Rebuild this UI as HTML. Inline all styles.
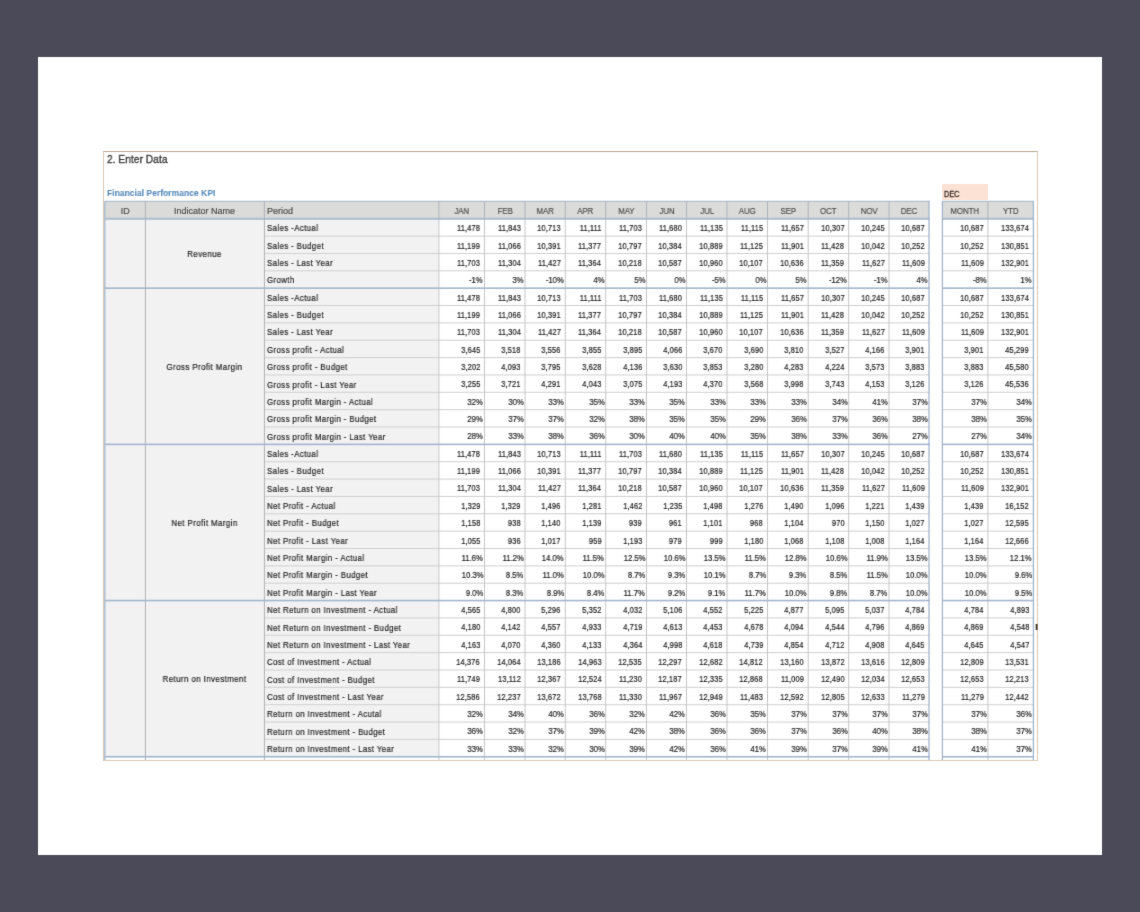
<!DOCTYPE html><html><head><meta charset="utf-8"><style>
*{margin:0;padding:0;box-sizing:border-box}
html,body{width:1140px;height:912px;overflow:hidden;background:#4b4a58}
body{position:relative;font-family:"Liberation Sans",sans-serif}
div{position:absolute}
.t{will-change:transform}
.t{white-space:nowrap;line-height:1}
.n{font-size:9.4px;color:#222222;text-align:right;transform-origin:100% 50%;-webkit-text-stroke:0.22px #222222}
.l{font-size:8.7px;color:#222222;transform-origin:0 50%;letter-spacing:0.45px;-webkit-text-stroke:0.2px #222222}
.h{font-size:9px;color:#4c4c4c;text-align:center;letter-spacing:0px;-webkit-text-stroke:0.18px #4c4c4c}
.g{font-size:8.8px;color:#222222;text-align:center;-webkit-text-stroke:0.2px #222222}
</style></head><body><svg width="0" height="0" style="position:absolute"><filter id="f" x="0" y="0" width="100%" height="100%" color-interpolation-filters="sRGB"><feConvolveMatrix order="3" kernelMatrix="0.0100 0.0800 0.0100 0.0800 0.6400 0.0800 0.0100 0.0800 0.0100" edgeMode="duplicate"/></filter></svg><div id="w" style="left:0;top:0;width:1140px;height:912px;filter:url(#f)"><div style="left:38.00px;top:57.00px;width:1064.00px;height:798.00px;background:#ffffff;"></div>
<div style="left:103px;top:151px;width:935px;height:610px;border:1px solid #dbc9b3;border-top-color:#b6a892"></div>
<div class="t" style="left:107px;top:154.1px;font-size:11.8px;color:#383838;transform:scaleX(0.87);transform-origin:0 50%;-webkit-text-stroke:0.35px #383838">2. Enter Data</div>
<div class="t" style="left:107px;top:188.3px;font-size:9.5px;color:#5286b9;font-weight:bold;-webkit-text-stroke:0.05px #5286b9;transform:scaleX(0.9);transform-origin:0 50%">Financial Performance KPI</div>
<div style="left:942.40px;top:184.00px;width:45.50px;height:16.00px;background:#fbe2d5;"></div>
<div class="t" style="left:944.4px;top:189.5px;font-size:8.5px;color:#3a2e28;transform:scaleX(0.86);transform-origin:0 50%;-webkit-text-stroke:0.3px #3a2e28">DEC</div>
<div style="left:104.80px;top:201.30px;width:824.20px;height:17.45px;background:#dbdbd9;"></div>
<div style="left:942.40px;top:201.30px;width:91.00px;height:17.45px;background:#dbdbd9;"></div>
<div style="left:104.80px;top:218.75px;width:334.10px;height:538.00px;background:#f2f2f2;"></div>
<div style="left:264px;top:235px;width:665px;height:1px;background:rgba(207,207,207,0.395)"></div>
<div style="left:264px;top:236px;width:665px;height:1px;background:rgba(207,207,207,0.605)"></div>
<div style="left:942px;top:235px;width:91px;height:1px;background:rgba(207,207,207,0.395)"></div>
<div style="left:942px;top:236px;width:91px;height:1px;background:rgba(207,207,207,0.605)"></div>
<div style="left:264px;top:253px;width:665px;height:1px;background:rgba(207,207,207,0.960)"></div>
<div style="left:942px;top:253px;width:91px;height:1px;background:rgba(207,207,207,0.960)"></div>
<div style="left:264px;top:270px;width:665px;height:1px;background:rgba(207,207,207,0.685)"></div>
<div style="left:264px;top:271px;width:665px;height:1px;background:rgba(207,207,207,0.315)"></div>
<div style="left:942px;top:270px;width:91px;height:1px;background:rgba(207,207,207,0.685)"></div>
<div style="left:942px;top:271px;width:91px;height:1px;background:rgba(207,207,207,0.315)"></div>
<div style="left:264px;top:305px;width:665px;height:1px;background:rgba(207,207,207,0.975)"></div>
<div style="left:942px;top:305px;width:91px;height:1px;background:rgba(207,207,207,0.975)"></div>
<div style="left:264px;top:322px;width:665px;height:1px;background:rgba(207,207,207,0.620)"></div>
<div style="left:264px;top:323px;width:665px;height:1px;background:rgba(207,207,207,0.380)"></div>
<div style="left:942px;top:322px;width:91px;height:1px;background:rgba(207,207,207,0.620)"></div>
<div style="left:942px;top:323px;width:91px;height:1px;background:rgba(207,207,207,0.380)"></div>
<div style="left:264px;top:339px;width:665px;height:1px;background:rgba(207,207,207,0.265)"></div>
<div style="left:264px;top:340px;width:665px;height:1px;background:rgba(207,207,207,0.735)"></div>
<div style="left:942px;top:339px;width:91px;height:1px;background:rgba(207,207,207,0.265)"></div>
<div style="left:942px;top:340px;width:91px;height:1px;background:rgba(207,207,207,0.735)"></div>
<div style="left:264px;top:357px;width:665px;height:1px;background:rgba(207,207,207,0.910)"></div>
<div style="left:264px;top:358px;width:665px;height:1px;background:rgba(207,207,207,0.090)"></div>
<div style="left:942px;top:357px;width:91px;height:1px;background:rgba(207,207,207,0.910)"></div>
<div style="left:942px;top:358px;width:91px;height:1px;background:rgba(207,207,207,0.090)"></div>
<div style="left:264px;top:374px;width:665px;height:1px;background:rgba(207,207,207,0.555)"></div>
<div style="left:264px;top:375px;width:665px;height:1px;background:rgba(207,207,207,0.445)"></div>
<div style="left:942px;top:374px;width:91px;height:1px;background:rgba(207,207,207,0.555)"></div>
<div style="left:942px;top:375px;width:91px;height:1px;background:rgba(207,207,207,0.445)"></div>
<div style="left:264px;top:391px;width:665px;height:1px;background:rgba(207,207,207,0.200)"></div>
<div style="left:264px;top:392px;width:665px;height:1px;background:rgba(207,207,207,0.800)"></div>
<div style="left:942px;top:391px;width:91px;height:1px;background:rgba(207,207,207,0.200)"></div>
<div style="left:942px;top:392px;width:91px;height:1px;background:rgba(207,207,207,0.800)"></div>
<div style="left:264px;top:409px;width:665px;height:1px;background:rgba(207,207,207,0.845)"></div>
<div style="left:264px;top:410px;width:665px;height:1px;background:rgba(207,207,207,0.155)"></div>
<div style="left:942px;top:409px;width:91px;height:1px;background:rgba(207,207,207,0.845)"></div>
<div style="left:942px;top:410px;width:91px;height:1px;background:rgba(207,207,207,0.155)"></div>
<div style="left:264px;top:426px;width:665px;height:1px;background:rgba(207,207,207,0.490)"></div>
<div style="left:264px;top:427px;width:665px;height:1px;background:rgba(207,207,207,0.510)"></div>
<div style="left:942px;top:426px;width:91px;height:1px;background:rgba(207,207,207,0.490)"></div>
<div style="left:942px;top:427px;width:91px;height:1px;background:rgba(207,207,207,0.510)"></div>
<div style="left:264px;top:461px;width:665px;height:1px;background:rgba(207,207,207,0.780)"></div>
<div style="left:264px;top:462px;width:665px;height:1px;background:rgba(207,207,207,0.220)"></div>
<div style="left:942px;top:461px;width:91px;height:1px;background:rgba(207,207,207,0.780)"></div>
<div style="left:942px;top:462px;width:91px;height:1px;background:rgba(207,207,207,0.220)"></div>
<div style="left:264px;top:478px;width:665px;height:1px;background:rgba(207,207,207,0.425)"></div>
<div style="left:264px;top:479px;width:665px;height:1px;background:rgba(207,207,207,0.575)"></div>
<div style="left:942px;top:478px;width:91px;height:1px;background:rgba(207,207,207,0.425)"></div>
<div style="left:942px;top:479px;width:91px;height:1px;background:rgba(207,207,207,0.575)"></div>
<div style="left:264px;top:495px;width:665px;height:1px;background:rgba(207,207,207,0.070)"></div>
<div style="left:264px;top:496px;width:665px;height:1px;background:rgba(207,207,207,0.930)"></div>
<div style="left:942px;top:495px;width:91px;height:1px;background:rgba(207,207,207,0.070)"></div>
<div style="left:942px;top:496px;width:91px;height:1px;background:rgba(207,207,207,0.930)"></div>
<div style="left:264px;top:513px;width:665px;height:1px;background:rgba(207,207,207,0.715)"></div>
<div style="left:264px;top:514px;width:665px;height:1px;background:rgba(207,207,207,0.285)"></div>
<div style="left:942px;top:513px;width:91px;height:1px;background:rgba(207,207,207,0.715)"></div>
<div style="left:942px;top:514px;width:91px;height:1px;background:rgba(207,207,207,0.285)"></div>
<div style="left:264px;top:530px;width:665px;height:1px;background:rgba(207,207,207,0.360)"></div>
<div style="left:264px;top:531px;width:665px;height:1px;background:rgba(207,207,207,0.640)"></div>
<div style="left:942px;top:530px;width:91px;height:1px;background:rgba(207,207,207,0.360)"></div>
<div style="left:942px;top:531px;width:91px;height:1px;background:rgba(207,207,207,0.640)"></div>
<div style="left:264px;top:548px;width:665px;height:1px;background:rgba(207,207,207,0.995)"></div>
<div style="left:942px;top:548px;width:91px;height:1px;background:rgba(207,207,207,0.995)"></div>
<div style="left:264px;top:565px;width:665px;height:1px;background:rgba(207,207,207,0.650)"></div>
<div style="left:264px;top:566px;width:665px;height:1px;background:rgba(207,207,207,0.350)"></div>
<div style="left:942px;top:565px;width:91px;height:1px;background:rgba(207,207,207,0.650)"></div>
<div style="left:942px;top:566px;width:91px;height:1px;background:rgba(207,207,207,0.350)"></div>
<div style="left:264px;top:582px;width:665px;height:1px;background:rgba(207,207,207,0.295)"></div>
<div style="left:264px;top:583px;width:665px;height:1px;background:rgba(207,207,207,0.705)"></div>
<div style="left:942px;top:582px;width:91px;height:1px;background:rgba(207,207,207,0.295)"></div>
<div style="left:942px;top:583px;width:91px;height:1px;background:rgba(207,207,207,0.705)"></div>
<div style="left:264px;top:617px;width:665px;height:1px;background:rgba(207,207,207,0.585)"></div>
<div style="left:264px;top:618px;width:665px;height:1px;background:rgba(207,207,207,0.415)"></div>
<div style="left:942px;top:617px;width:91px;height:1px;background:rgba(207,207,207,0.585)"></div>
<div style="left:942px;top:618px;width:91px;height:1px;background:rgba(207,207,207,0.415)"></div>
<div style="left:264px;top:634px;width:665px;height:1px;background:rgba(207,207,207,0.230)"></div>
<div style="left:264px;top:635px;width:665px;height:1px;background:rgba(207,207,207,0.770)"></div>
<div style="left:942px;top:634px;width:91px;height:1px;background:rgba(207,207,207,0.230)"></div>
<div style="left:942px;top:635px;width:91px;height:1px;background:rgba(207,207,207,0.770)"></div>
<div style="left:264px;top:652px;width:665px;height:1px;background:rgba(207,207,207,0.875)"></div>
<div style="left:264px;top:653px;width:665px;height:1px;background:rgba(207,207,207,0.125)"></div>
<div style="left:942px;top:652px;width:91px;height:1px;background:rgba(207,207,207,0.875)"></div>
<div style="left:942px;top:653px;width:91px;height:1px;background:rgba(207,207,207,0.125)"></div>
<div style="left:264px;top:669px;width:665px;height:1px;background:rgba(207,207,207,0.520)"></div>
<div style="left:264px;top:670px;width:665px;height:1px;background:rgba(207,207,207,0.480)"></div>
<div style="left:942px;top:669px;width:91px;height:1px;background:rgba(207,207,207,0.520)"></div>
<div style="left:942px;top:670px;width:91px;height:1px;background:rgba(207,207,207,0.480)"></div>
<div style="left:264px;top:686px;width:665px;height:1px;background:rgba(207,207,207,0.165)"></div>
<div style="left:264px;top:687px;width:665px;height:1px;background:rgba(207,207,207,0.835)"></div>
<div style="left:942px;top:686px;width:91px;height:1px;background:rgba(207,207,207,0.165)"></div>
<div style="left:942px;top:687px;width:91px;height:1px;background:rgba(207,207,207,0.835)"></div>
<div style="left:264px;top:704px;width:665px;height:1px;background:rgba(207,207,207,0.810)"></div>
<div style="left:264px;top:705px;width:665px;height:1px;background:rgba(207,207,207,0.190)"></div>
<div style="left:942px;top:704px;width:91px;height:1px;background:rgba(207,207,207,0.810)"></div>
<div style="left:942px;top:705px;width:91px;height:1px;background:rgba(207,207,207,0.190)"></div>
<div style="left:264px;top:721px;width:665px;height:1px;background:rgba(207,207,207,0.455)"></div>
<div style="left:264px;top:722px;width:665px;height:1px;background:rgba(207,207,207,0.545)"></div>
<div style="left:942px;top:721px;width:91px;height:1px;background:rgba(207,207,207,0.455)"></div>
<div style="left:942px;top:722px;width:91px;height:1px;background:rgba(207,207,207,0.545)"></div>
<div style="left:264px;top:738px;width:665px;height:1px;background:rgba(207,207,207,0.100)"></div>
<div style="left:264px;top:739px;width:665px;height:1px;background:rgba(207,207,207,0.900)"></div>
<div style="left:942px;top:738px;width:91px;height:1px;background:rgba(207,207,207,0.100)"></div>
<div style="left:942px;top:739px;width:91px;height:1px;background:rgba(207,207,207,0.900)"></div>
<div style="left:144px;top:219px;width:1px;height:541px;background:rgba(176,176,176,0.100)"></div>
<div style="left:145px;top:219px;width:1px;height:541px;background:rgba(176,176,176,0.900)"></div>
<div style="left:144px;top:201px;width:1px;height:18px;background:rgba(173,179,185,0.100)"></div>
<div style="left:145px;top:201px;width:1px;height:18px;background:rgba(173,179,185,0.900)"></div>
<div style="left:263px;top:219px;width:1px;height:541px;background:rgba(176,176,176,0.100)"></div>
<div style="left:264px;top:219px;width:1px;height:541px;background:rgba(176,176,176,0.900)"></div>
<div style="left:263px;top:201px;width:1px;height:18px;background:rgba(173,179,185,0.100)"></div>
<div style="left:264px;top:201px;width:1px;height:18px;background:rgba(173,179,185,0.900)"></div>
<div style="left:438px;top:219px;width:1px;height:541px;background:rgba(198,198,198,0.600)"></div>
<div style="left:439px;top:219px;width:1px;height:541px;background:rgba(198,198,198,0.400)"></div>
<div style="left:438px;top:201px;width:1px;height:18px;background:rgba(173,179,185,0.600)"></div>
<div style="left:439px;top:201px;width:1px;height:18px;background:rgba(173,179,185,0.400)"></div>
<div style="left:484px;top:219px;width:1px;height:541px;background:rgba(198,198,198,1.000)"></div>
<div style="left:484px;top:201px;width:1px;height:18px;background:rgba(173,179,185,1.000)"></div>
<div style="left:524px;top:219px;width:1px;height:541px;background:rgba(198,198,198,0.500)"></div>
<div style="left:525px;top:219px;width:1px;height:541px;background:rgba(198,198,198,0.500)"></div>
<div style="left:524px;top:201px;width:1px;height:18px;background:rgba(173,179,185,0.500)"></div>
<div style="left:525px;top:201px;width:1px;height:18px;background:rgba(173,179,185,0.500)"></div>
<div style="left:564px;top:219px;width:1px;height:541px;background:rgba(198,198,198,0.200)"></div>
<div style="left:565px;top:219px;width:1px;height:541px;background:rgba(198,198,198,0.800)"></div>
<div style="left:564px;top:201px;width:1px;height:18px;background:rgba(173,179,185,0.200)"></div>
<div style="left:565px;top:201px;width:1px;height:18px;background:rgba(173,179,185,0.800)"></div>
<div style="left:605px;top:219px;width:1px;height:541px;background:rgba(198,198,198,0.800)"></div>
<div style="left:606px;top:219px;width:1px;height:541px;background:rgba(198,198,198,0.200)"></div>
<div style="left:605px;top:201px;width:1px;height:18px;background:rgba(173,179,185,0.800)"></div>
<div style="left:606px;top:201px;width:1px;height:18px;background:rgba(173,179,185,0.200)"></div>
<div style="left:646px;top:219px;width:1px;height:541px;background:rgba(198,198,198,1.000)"></div>
<div style="left:646px;top:201px;width:1px;height:18px;background:rgba(173,179,185,1.000)"></div>
<div style="left:686px;top:219px;width:1px;height:541px;background:rgba(198,198,198,1.000)"></div>
<div style="left:686px;top:201px;width:1px;height:18px;background:rgba(173,179,185,1.000)"></div>
<div style="left:726px;top:219px;width:1px;height:541px;background:rgba(198,198,198,0.500)"></div>
<div style="left:727px;top:219px;width:1px;height:541px;background:rgba(198,198,198,0.500)"></div>
<div style="left:726px;top:201px;width:1px;height:18px;background:rgba(173,179,185,0.500)"></div>
<div style="left:727px;top:201px;width:1px;height:18px;background:rgba(173,179,185,0.500)"></div>
<div style="left:767px;top:219px;width:1px;height:541px;background:rgba(198,198,198,1.000)"></div>
<div style="left:767px;top:201px;width:1px;height:18px;background:rgba(173,179,185,1.000)"></div>
<div style="left:807px;top:219px;width:1px;height:541px;background:rgba(198,198,198,0.300)"></div>
<div style="left:808px;top:219px;width:1px;height:541px;background:rgba(198,198,198,0.700)"></div>
<div style="left:807px;top:201px;width:1px;height:18px;background:rgba(173,179,185,0.300)"></div>
<div style="left:808px;top:201px;width:1px;height:18px;background:rgba(173,179,185,0.700)"></div>
<div style="left:848px;top:219px;width:1px;height:541px;background:rgba(198,198,198,0.800)"></div>
<div style="left:849px;top:219px;width:1px;height:541px;background:rgba(198,198,198,0.200)"></div>
<div style="left:848px;top:201px;width:1px;height:18px;background:rgba(173,179,185,0.800)"></div>
<div style="left:849px;top:201px;width:1px;height:18px;background:rgba(173,179,185,0.200)"></div>
<div style="left:888px;top:219px;width:1px;height:541px;background:rgba(198,198,198,0.500)"></div>
<div style="left:889px;top:219px;width:1px;height:541px;background:rgba(198,198,198,0.500)"></div>
<div style="left:888px;top:201px;width:1px;height:18px;background:rgba(173,179,185,0.500)"></div>
<div style="left:889px;top:201px;width:1px;height:18px;background:rgba(173,179,185,0.500)"></div>
<div style="left:987px;top:219px;width:1px;height:541px;background:rgba(198,198,198,0.600)"></div>
<div style="left:988px;top:219px;width:1px;height:541px;background:rgba(198,198,198,0.400)"></div>
<div style="left:987px;top:201px;width:1px;height:18px;background:rgba(173,179,185,0.600)"></div>
<div style="left:988px;top:201px;width:1px;height:18px;background:rgba(173,179,185,0.400)"></div>
<div style="left:105px;top:200px;width:825px;height:1px;background:rgba(162,182,206,0.200)"></div>
<div style="left:105px;top:201px;width:825px;height:1px;background:rgba(162,182,206,0.800)"></div>
<div style="left:105px;top:217px;width:825px;height:1px;background:rgba(169,182,198,0.250)"></div>
<div style="left:105px;top:218px;width:825px;height:1px;background:rgba(169,182,198,0.750)"></div>
<div style="left:105px;top:218px;width:825px;height:1px;background:rgba(162,182,206,0.250)"></div>
<div style="left:105px;top:219px;width:825px;height:1px;background:rgba(162,182,206,0.750)"></div>
<div style="left:105px;top:287px;width:825px;height:1px;background:rgba(162,182,206,0.630)"></div>
<div style="left:105px;top:288px;width:825px;height:1px;background:rgba(162,182,206,0.970)"></div>
<div style="left:105px;top:443px;width:825px;height:1px;background:rgba(162,182,206,0.435)"></div>
<div style="left:105px;top:444px;width:825px;height:1px;background:rgba(162,182,206,1.000)"></div>
<div style="left:105px;top:445px;width:825px;height:1px;background:rgba(162,182,206,0.165)"></div>
<div style="left:105px;top:599px;width:825px;height:1px;background:rgba(162,182,206,0.240)"></div>
<div style="left:105px;top:600px;width:825px;height:1px;background:rgba(162,182,206,1.000)"></div>
<div style="left:105px;top:601px;width:825px;height:1px;background:rgba(162,182,206,0.360)"></div>
<div style="left:105px;top:755px;width:825px;height:1px;background:rgba(162,182,206,0.045)"></div>
<div style="left:105px;top:756px;width:825px;height:1px;background:rgba(162,182,206,1.000)"></div>
<div style="left:105px;top:757px;width:825px;height:1px;background:rgba(162,182,206,0.555)"></div>
<div style="left:104px;top:201px;width:1px;height:559px;background:rgba(162,182,206,0.850)"></div>
<div style="left:105px;top:201px;width:1px;height:559px;background:rgba(162,182,206,0.450)"></div>
<div style="left:928px;top:201px;width:1px;height:559px;background:rgba(162,182,206,0.650)"></div>
<div style="left:929px;top:201px;width:1px;height:559px;background:rgba(162,182,206,0.650)"></div>
<div style="left:942px;top:200px;width:92px;height:1px;background:rgba(162,182,206,0.200)"></div>
<div style="left:942px;top:201px;width:92px;height:1px;background:rgba(162,182,206,0.800)"></div>
<div style="left:942px;top:217px;width:92px;height:1px;background:rgba(169,182,198,0.250)"></div>
<div style="left:942px;top:218px;width:92px;height:1px;background:rgba(169,182,198,0.750)"></div>
<div style="left:942px;top:218px;width:92px;height:1px;background:rgba(162,182,206,0.250)"></div>
<div style="left:942px;top:219px;width:92px;height:1px;background:rgba(162,182,206,0.750)"></div>
<div style="left:942px;top:287px;width:92px;height:1px;background:rgba(162,182,206,0.630)"></div>
<div style="left:942px;top:288px;width:92px;height:1px;background:rgba(162,182,206,0.970)"></div>
<div style="left:942px;top:443px;width:92px;height:1px;background:rgba(162,182,206,0.435)"></div>
<div style="left:942px;top:444px;width:92px;height:1px;background:rgba(162,182,206,1.000)"></div>
<div style="left:942px;top:445px;width:92px;height:1px;background:rgba(162,182,206,0.165)"></div>
<div style="left:942px;top:599px;width:92px;height:1px;background:rgba(162,182,206,0.240)"></div>
<div style="left:942px;top:600px;width:92px;height:1px;background:rgba(162,182,206,1.000)"></div>
<div style="left:942px;top:601px;width:92px;height:1px;background:rgba(162,182,206,0.360)"></div>
<div style="left:942px;top:755px;width:92px;height:1px;background:rgba(162,182,206,0.045)"></div>
<div style="left:942px;top:756px;width:92px;height:1px;background:rgba(162,182,206,1.000)"></div>
<div style="left:942px;top:757px;width:92px;height:1px;background:rgba(162,182,206,0.555)"></div>
<div style="left:941px;top:201px;width:1px;height:559px;background:rgba(162,182,206,0.250)"></div>
<div style="left:942px;top:201px;width:1px;height:559px;background:rgba(162,182,206,1.000)"></div>
<div style="left:943px;top:201px;width:1px;height:559px;background:rgba(162,182,206,0.050)"></div>
<div style="left:1032px;top:201px;width:1px;height:559px;background:rgba(162,182,206,0.250)"></div>
<div style="left:1033px;top:201px;width:1px;height:559px;background:rgba(162,182,206,1.000)"></div>
<div style="left:1034px;top:201px;width:1px;height:559px;background:rgba(162,182,206,0.050)"></div>
<div class="t h" style="left:104.80px;top:207.30px;width:40.60px">ID</div>
<div class="t h" style="left:145.40px;top:207.30px;width:119.00px">Indicator Name</div>
<div class="t h" style="left:266.70px;top:207.30px;text-align:left">Period</div>
<div class="t h" style="left:438.90px;top:207.30px;width:45.60px;transform:scaleX(0.86)">JAN</div>
<div class="t h" style="left:484.50px;top:207.30px;width:40.50px;transform:scaleX(0.86)">FEB</div>
<div class="t h" style="left:525.00px;top:207.30px;width:40.30px;transform:scaleX(0.86)">MAR</div>
<div class="t h" style="left:565.30px;top:207.30px;width:40.40px;transform:scaleX(0.86)">APR</div>
<div class="t h" style="left:605.70px;top:207.30px;width:40.80px;transform:scaleX(0.86)">MAY</div>
<div class="t h" style="left:646.50px;top:207.30px;width:40.00px;transform:scaleX(0.86)">JUN</div>
<div class="t h" style="left:686.50px;top:207.30px;width:40.50px;transform:scaleX(0.86)">JUL</div>
<div class="t h" style="left:727.00px;top:207.30px;width:40.50px;transform:scaleX(0.86)">AUG</div>
<div class="t h" style="left:767.50px;top:207.30px;width:40.70px;transform:scaleX(0.86)">SEP</div>
<div class="t h" style="left:808.20px;top:207.30px;width:40.50px;transform:scaleX(0.86)">OCT</div>
<div class="t h" style="left:848.70px;top:207.30px;width:40.30px;transform:scaleX(0.86)">NOV</div>
<div class="t h" style="left:889.00px;top:207.30px;width:40.00px;transform:scaleX(0.86)">DEC</div>
<div class="t h" style="left:942.40px;top:207.30px;width:45.50px;transform:scaleX(0.86)">MONTH</div>
<div class="t h" style="left:987.90px;top:207.30px;width:45.50px;transform:scaleX(0.86)">YTD</div>
<div class="t g" style="left:145.40px;top:249.71px;width:119.00px;transform:scaleX(0.9);letter-spacing:0.45px">Revenue</div>
<div class="t g" style="left:145.40px;top:362.52px;width:119.00px;transform:scaleX(0.9);letter-spacing:0.45px">Gross Profit Margin</div>
<div class="t g" style="left:145.40px;top:518.71px;width:119.00px;transform:scaleX(0.9);letter-spacing:0.45px">Net Profit Margin</div>
<div class="t g" style="left:145.40px;top:674.91px;width:119.00px;transform:scaleX(0.9);letter-spacing:0.45px">Return on Investment</div>
<div class="t l" style="left:266.70px;top:224.35px;transform:scaleX(0.9)">Sales -Actual</div>
<div class="t n" style="right:659.90px;top:223.15px;transform:scaleX(0.823)">11,478</div>
<div class="t n" style="right:619.40px;top:223.15px;transform:scaleX(0.823)">11,843</div>
<div class="t n" style="right:579.10px;top:223.15px;transform:scaleX(0.823)">10,713</div>
<div class="t n" style="right:538.70px;top:223.15px;transform:scaleX(0.823)">11,111</div>
<div class="t n" style="right:497.90px;top:223.15px;transform:scaleX(0.823)">11,703</div>
<div class="t n" style="right:457.90px;top:223.15px;transform:scaleX(0.823)">11,680</div>
<div class="t n" style="right:417.40px;top:223.15px;transform:scaleX(0.823)">11,135</div>
<div class="t n" style="right:376.90px;top:223.15px;transform:scaleX(0.823)">11,115</div>
<div class="t n" style="right:336.20px;top:223.15px;transform:scaleX(0.823)">11,657</div>
<div class="t n" style="right:295.70px;top:223.15px;transform:scaleX(0.823)">10,307</div>
<div class="t n" style="right:255.40px;top:223.15px;transform:scaleX(0.823)">10,245</div>
<div class="t n" style="right:215.40px;top:223.15px;transform:scaleX(0.823)">10,687</div>
<div class="t n" style="right:156.50px;top:223.15px;transform:scaleX(0.823)">10,687</div>
<div class="t n" style="right:111.00px;top:223.15px;transform:scaleX(0.823)">133,674</div>
<div class="t l" style="left:266.70px;top:241.70px;transform:scaleX(0.9)">Sales - Budget</div>
<div class="t n" style="right:659.90px;top:240.50px;transform:scaleX(0.823)">11,199</div>
<div class="t n" style="right:619.40px;top:240.50px;transform:scaleX(0.823)">11,066</div>
<div class="t n" style="right:579.10px;top:240.50px;transform:scaleX(0.823)">10,391</div>
<div class="t n" style="right:538.70px;top:240.50px;transform:scaleX(0.823)">11,377</div>
<div class="t n" style="right:497.90px;top:240.50px;transform:scaleX(0.823)">10,797</div>
<div class="t n" style="right:457.90px;top:240.50px;transform:scaleX(0.823)">10,384</div>
<div class="t n" style="right:417.40px;top:240.50px;transform:scaleX(0.823)">10,889</div>
<div class="t n" style="right:376.90px;top:240.50px;transform:scaleX(0.823)">11,125</div>
<div class="t n" style="right:336.20px;top:240.50px;transform:scaleX(0.823)">11,901</div>
<div class="t n" style="right:295.70px;top:240.50px;transform:scaleX(0.823)">11,428</div>
<div class="t n" style="right:255.40px;top:240.50px;transform:scaleX(0.823)">10,042</div>
<div class="t n" style="right:215.40px;top:240.50px;transform:scaleX(0.823)">10,252</div>
<div class="t n" style="right:156.50px;top:240.50px;transform:scaleX(0.823)">10,252</div>
<div class="t n" style="right:111.00px;top:240.50px;transform:scaleX(0.823)">130,851</div>
<div class="t l" style="left:266.70px;top:259.06px;transform:scaleX(0.9)">Sales - Last Year</div>
<div class="t n" style="right:659.90px;top:257.86px;transform:scaleX(0.823)">11,703</div>
<div class="t n" style="right:619.40px;top:257.86px;transform:scaleX(0.823)">11,304</div>
<div class="t n" style="right:579.10px;top:257.86px;transform:scaleX(0.823)">11,427</div>
<div class="t n" style="right:538.70px;top:257.86px;transform:scaleX(0.823)">11,364</div>
<div class="t n" style="right:497.90px;top:257.86px;transform:scaleX(0.823)">10,218</div>
<div class="t n" style="right:457.90px;top:257.86px;transform:scaleX(0.823)">10,587</div>
<div class="t n" style="right:417.40px;top:257.86px;transform:scaleX(0.823)">10,960</div>
<div class="t n" style="right:376.90px;top:257.86px;transform:scaleX(0.823)">10,107</div>
<div class="t n" style="right:336.20px;top:257.86px;transform:scaleX(0.823)">10,636</div>
<div class="t n" style="right:295.70px;top:257.86px;transform:scaleX(0.823)">11,359</div>
<div class="t n" style="right:255.40px;top:257.86px;transform:scaleX(0.823)">11,627</div>
<div class="t n" style="right:215.40px;top:257.86px;transform:scaleX(0.823)">11,609</div>
<div class="t n" style="right:156.50px;top:257.86px;transform:scaleX(0.823)">11,609</div>
<div class="t n" style="right:111.00px;top:257.86px;transform:scaleX(0.823)">132,901</div>
<div class="t l" style="left:266.70px;top:276.42px;transform:scaleX(0.9)">Growth</div>
<div class="t n" style="right:656.90px;top:275.21px;transform:scaleX(0.823)">-1%</div>
<div class="t n" style="right:616.40px;top:275.21px;transform:scaleX(0.823)">3%</div>
<div class="t n" style="right:576.10px;top:275.21px;transform:scaleX(0.823)">-10%</div>
<div class="t n" style="right:535.70px;top:275.21px;transform:scaleX(0.823)">4%</div>
<div class="t n" style="right:494.90px;top:275.21px;transform:scaleX(0.823)">5%</div>
<div class="t n" style="right:454.90px;top:275.21px;transform:scaleX(0.823)">0%</div>
<div class="t n" style="right:414.40px;top:275.21px;transform:scaleX(0.823)">-5%</div>
<div class="t n" style="right:373.90px;top:275.21px;transform:scaleX(0.823)">0%</div>
<div class="t n" style="right:333.20px;top:275.21px;transform:scaleX(0.823)">5%</div>
<div class="t n" style="right:292.70px;top:275.21px;transform:scaleX(0.823)">-12%</div>
<div class="t n" style="right:252.40px;top:275.21px;transform:scaleX(0.823)">-1%</div>
<div class="t n" style="right:212.40px;top:275.21px;transform:scaleX(0.823)">4%</div>
<div class="t n" style="right:153.50px;top:275.21px;transform:scaleX(0.823)">-8%</div>
<div class="t n" style="right:108.00px;top:275.21px;transform:scaleX(0.823)">1%</div>
<div class="t l" style="left:266.70px;top:293.77px;transform:scaleX(0.9)">Sales -Actual</div>
<div class="t n" style="right:659.90px;top:292.57px;transform:scaleX(0.823)">11,478</div>
<div class="t n" style="right:619.40px;top:292.57px;transform:scaleX(0.823)">11,843</div>
<div class="t n" style="right:579.10px;top:292.57px;transform:scaleX(0.823)">10,713</div>
<div class="t n" style="right:538.70px;top:292.57px;transform:scaleX(0.823)">11,111</div>
<div class="t n" style="right:497.90px;top:292.57px;transform:scaleX(0.823)">11,703</div>
<div class="t n" style="right:457.90px;top:292.57px;transform:scaleX(0.823)">11,680</div>
<div class="t n" style="right:417.40px;top:292.57px;transform:scaleX(0.823)">11,135</div>
<div class="t n" style="right:376.90px;top:292.57px;transform:scaleX(0.823)">11,115</div>
<div class="t n" style="right:336.20px;top:292.57px;transform:scaleX(0.823)">11,657</div>
<div class="t n" style="right:295.70px;top:292.57px;transform:scaleX(0.823)">10,307</div>
<div class="t n" style="right:255.40px;top:292.57px;transform:scaleX(0.823)">10,245</div>
<div class="t n" style="right:215.40px;top:292.57px;transform:scaleX(0.823)">10,687</div>
<div class="t n" style="right:156.50px;top:292.57px;transform:scaleX(0.823)">10,687</div>
<div class="t n" style="right:111.00px;top:292.57px;transform:scaleX(0.823)">133,674</div>
<div class="t l" style="left:266.70px;top:311.12px;transform:scaleX(0.9)">Sales - Budget</div>
<div class="t n" style="right:659.90px;top:309.92px;transform:scaleX(0.823)">11,199</div>
<div class="t n" style="right:619.40px;top:309.92px;transform:scaleX(0.823)">11,066</div>
<div class="t n" style="right:579.10px;top:309.92px;transform:scaleX(0.823)">10,391</div>
<div class="t n" style="right:538.70px;top:309.92px;transform:scaleX(0.823)">11,377</div>
<div class="t n" style="right:497.90px;top:309.92px;transform:scaleX(0.823)">10,797</div>
<div class="t n" style="right:457.90px;top:309.92px;transform:scaleX(0.823)">10,384</div>
<div class="t n" style="right:417.40px;top:309.92px;transform:scaleX(0.823)">10,889</div>
<div class="t n" style="right:376.90px;top:309.92px;transform:scaleX(0.823)">11,125</div>
<div class="t n" style="right:336.20px;top:309.92px;transform:scaleX(0.823)">11,901</div>
<div class="t n" style="right:295.70px;top:309.92px;transform:scaleX(0.823)">11,428</div>
<div class="t n" style="right:255.40px;top:309.92px;transform:scaleX(0.823)">10,042</div>
<div class="t n" style="right:215.40px;top:309.92px;transform:scaleX(0.823)">10,252</div>
<div class="t n" style="right:156.50px;top:309.92px;transform:scaleX(0.823)">10,252</div>
<div class="t n" style="right:111.00px;top:309.92px;transform:scaleX(0.823)">130,851</div>
<div class="t l" style="left:266.70px;top:328.48px;transform:scaleX(0.9)">Sales - Last Year</div>
<div class="t n" style="right:659.90px;top:327.28px;transform:scaleX(0.823)">11,703</div>
<div class="t n" style="right:619.40px;top:327.28px;transform:scaleX(0.823)">11,304</div>
<div class="t n" style="right:579.10px;top:327.28px;transform:scaleX(0.823)">11,427</div>
<div class="t n" style="right:538.70px;top:327.28px;transform:scaleX(0.823)">11,364</div>
<div class="t n" style="right:497.90px;top:327.28px;transform:scaleX(0.823)">10,218</div>
<div class="t n" style="right:457.90px;top:327.28px;transform:scaleX(0.823)">10,587</div>
<div class="t n" style="right:417.40px;top:327.28px;transform:scaleX(0.823)">10,960</div>
<div class="t n" style="right:376.90px;top:327.28px;transform:scaleX(0.823)">10,107</div>
<div class="t n" style="right:336.20px;top:327.28px;transform:scaleX(0.823)">10,636</div>
<div class="t n" style="right:295.70px;top:327.28px;transform:scaleX(0.823)">11,359</div>
<div class="t n" style="right:255.40px;top:327.28px;transform:scaleX(0.823)">11,627</div>
<div class="t n" style="right:215.40px;top:327.28px;transform:scaleX(0.823)">11,609</div>
<div class="t n" style="right:156.50px;top:327.28px;transform:scaleX(0.823)">11,609</div>
<div class="t n" style="right:111.00px;top:327.28px;transform:scaleX(0.823)">132,901</div>
<div class="t l" style="left:266.70px;top:345.84px;transform:scaleX(0.9)">Gross profit - Actual</div>
<div class="t n" style="right:659.90px;top:344.63px;transform:scaleX(0.823)">3,645</div>
<div class="t n" style="right:619.40px;top:344.63px;transform:scaleX(0.823)">3,518</div>
<div class="t n" style="right:579.10px;top:344.63px;transform:scaleX(0.823)">3,556</div>
<div class="t n" style="right:538.70px;top:344.63px;transform:scaleX(0.823)">3,855</div>
<div class="t n" style="right:497.90px;top:344.63px;transform:scaleX(0.823)">3,895</div>
<div class="t n" style="right:457.90px;top:344.63px;transform:scaleX(0.823)">4,066</div>
<div class="t n" style="right:417.40px;top:344.63px;transform:scaleX(0.823)">3,670</div>
<div class="t n" style="right:376.90px;top:344.63px;transform:scaleX(0.823)">3,690</div>
<div class="t n" style="right:336.20px;top:344.63px;transform:scaleX(0.823)">3,810</div>
<div class="t n" style="right:295.70px;top:344.63px;transform:scaleX(0.823)">3,527</div>
<div class="t n" style="right:255.40px;top:344.63px;transform:scaleX(0.823)">4,166</div>
<div class="t n" style="right:215.40px;top:344.63px;transform:scaleX(0.823)">3,901</div>
<div class="t n" style="right:156.50px;top:344.63px;transform:scaleX(0.823)">3,901</div>
<div class="t n" style="right:111.00px;top:344.63px;transform:scaleX(0.823)">45,299</div>
<div class="t l" style="left:266.70px;top:363.19px;transform:scaleX(0.9)">Gross profit - Budget</div>
<div class="t n" style="right:659.90px;top:361.99px;transform:scaleX(0.823)">3,202</div>
<div class="t n" style="right:619.40px;top:361.99px;transform:scaleX(0.823)">4,093</div>
<div class="t n" style="right:579.10px;top:361.99px;transform:scaleX(0.823)">3,795</div>
<div class="t n" style="right:538.70px;top:361.99px;transform:scaleX(0.823)">3,628</div>
<div class="t n" style="right:497.90px;top:361.99px;transform:scaleX(0.823)">4,136</div>
<div class="t n" style="right:457.90px;top:361.99px;transform:scaleX(0.823)">3,630</div>
<div class="t n" style="right:417.40px;top:361.99px;transform:scaleX(0.823)">3,853</div>
<div class="t n" style="right:376.90px;top:361.99px;transform:scaleX(0.823)">3,280</div>
<div class="t n" style="right:336.20px;top:361.99px;transform:scaleX(0.823)">4,283</div>
<div class="t n" style="right:295.70px;top:361.99px;transform:scaleX(0.823)">4,224</div>
<div class="t n" style="right:255.40px;top:361.99px;transform:scaleX(0.823)">3,573</div>
<div class="t n" style="right:215.40px;top:361.99px;transform:scaleX(0.823)">3,883</div>
<div class="t n" style="right:156.50px;top:361.99px;transform:scaleX(0.823)">3,883</div>
<div class="t n" style="right:111.00px;top:361.99px;transform:scaleX(0.823)">45,580</div>
<div class="t l" style="left:266.70px;top:380.55px;transform:scaleX(0.9)">Gross profit - Last Year</div>
<div class="t n" style="right:659.90px;top:379.34px;transform:scaleX(0.823)">3,255</div>
<div class="t n" style="right:619.40px;top:379.34px;transform:scaleX(0.823)">3,721</div>
<div class="t n" style="right:579.10px;top:379.34px;transform:scaleX(0.823)">4,291</div>
<div class="t n" style="right:538.70px;top:379.34px;transform:scaleX(0.823)">4,043</div>
<div class="t n" style="right:497.90px;top:379.34px;transform:scaleX(0.823)">3,075</div>
<div class="t n" style="right:457.90px;top:379.34px;transform:scaleX(0.823)">4,193</div>
<div class="t n" style="right:417.40px;top:379.34px;transform:scaleX(0.823)">4,370</div>
<div class="t n" style="right:376.90px;top:379.34px;transform:scaleX(0.823)">3,568</div>
<div class="t n" style="right:336.20px;top:379.34px;transform:scaleX(0.823)">3,998</div>
<div class="t n" style="right:295.70px;top:379.34px;transform:scaleX(0.823)">3,743</div>
<div class="t n" style="right:255.40px;top:379.34px;transform:scaleX(0.823)">4,153</div>
<div class="t n" style="right:215.40px;top:379.34px;transform:scaleX(0.823)">3,126</div>
<div class="t n" style="right:156.50px;top:379.34px;transform:scaleX(0.823)">3,126</div>
<div class="t n" style="right:111.00px;top:379.34px;transform:scaleX(0.823)">45,536</div>
<div class="t l" style="left:266.70px;top:397.90px;transform:scaleX(0.9)">Gross profit Margin - Actual</div>
<div class="t n" style="right:656.90px;top:396.70px;transform:scaleX(0.823)">32%</div>
<div class="t n" style="right:616.40px;top:396.70px;transform:scaleX(0.823)">30%</div>
<div class="t n" style="right:576.10px;top:396.70px;transform:scaleX(0.823)">33%</div>
<div class="t n" style="right:535.70px;top:396.70px;transform:scaleX(0.823)">35%</div>
<div class="t n" style="right:494.90px;top:396.70px;transform:scaleX(0.823)">33%</div>
<div class="t n" style="right:454.90px;top:396.70px;transform:scaleX(0.823)">35%</div>
<div class="t n" style="right:414.40px;top:396.70px;transform:scaleX(0.823)">33%</div>
<div class="t n" style="right:373.90px;top:396.70px;transform:scaleX(0.823)">33%</div>
<div class="t n" style="right:333.20px;top:396.70px;transform:scaleX(0.823)">33%</div>
<div class="t n" style="right:292.70px;top:396.70px;transform:scaleX(0.823)">34%</div>
<div class="t n" style="right:252.40px;top:396.70px;transform:scaleX(0.823)">41%</div>
<div class="t n" style="right:212.40px;top:396.70px;transform:scaleX(0.823)">37%</div>
<div class="t n" style="right:153.50px;top:396.70px;transform:scaleX(0.823)">37%</div>
<div class="t n" style="right:108.00px;top:396.70px;transform:scaleX(0.823)">34%</div>
<div class="t l" style="left:266.70px;top:415.25px;transform:scaleX(0.9)">Gross profit Margin - Budget</div>
<div class="t n" style="right:656.90px;top:414.05px;transform:scaleX(0.823)">29%</div>
<div class="t n" style="right:616.40px;top:414.05px;transform:scaleX(0.823)">37%</div>
<div class="t n" style="right:576.10px;top:414.05px;transform:scaleX(0.823)">37%</div>
<div class="t n" style="right:535.70px;top:414.05px;transform:scaleX(0.823)">32%</div>
<div class="t n" style="right:494.90px;top:414.05px;transform:scaleX(0.823)">38%</div>
<div class="t n" style="right:454.90px;top:414.05px;transform:scaleX(0.823)">35%</div>
<div class="t n" style="right:414.40px;top:414.05px;transform:scaleX(0.823)">35%</div>
<div class="t n" style="right:373.90px;top:414.05px;transform:scaleX(0.823)">29%</div>
<div class="t n" style="right:333.20px;top:414.05px;transform:scaleX(0.823)">36%</div>
<div class="t n" style="right:292.70px;top:414.05px;transform:scaleX(0.823)">37%</div>
<div class="t n" style="right:252.40px;top:414.05px;transform:scaleX(0.823)">36%</div>
<div class="t n" style="right:212.40px;top:414.05px;transform:scaleX(0.823)">38%</div>
<div class="t n" style="right:153.50px;top:414.05px;transform:scaleX(0.823)">38%</div>
<div class="t n" style="right:108.00px;top:414.05px;transform:scaleX(0.823)">35%</div>
<div class="t l" style="left:266.70px;top:432.61px;transform:scaleX(0.9)">Gross profit Margin - Last Year</div>
<div class="t n" style="right:656.90px;top:431.41px;transform:scaleX(0.823)">28%</div>
<div class="t n" style="right:616.40px;top:431.41px;transform:scaleX(0.823)">33%</div>
<div class="t n" style="right:576.10px;top:431.41px;transform:scaleX(0.823)">38%</div>
<div class="t n" style="right:535.70px;top:431.41px;transform:scaleX(0.823)">36%</div>
<div class="t n" style="right:494.90px;top:431.41px;transform:scaleX(0.823)">30%</div>
<div class="t n" style="right:454.90px;top:431.41px;transform:scaleX(0.823)">40%</div>
<div class="t n" style="right:414.40px;top:431.41px;transform:scaleX(0.823)">40%</div>
<div class="t n" style="right:373.90px;top:431.41px;transform:scaleX(0.823)">35%</div>
<div class="t n" style="right:333.20px;top:431.41px;transform:scaleX(0.823)">38%</div>
<div class="t n" style="right:292.70px;top:431.41px;transform:scaleX(0.823)">33%</div>
<div class="t n" style="right:252.40px;top:431.41px;transform:scaleX(0.823)">36%</div>
<div class="t n" style="right:212.40px;top:431.41px;transform:scaleX(0.823)">27%</div>
<div class="t n" style="right:153.50px;top:431.41px;transform:scaleX(0.823)">27%</div>
<div class="t n" style="right:108.00px;top:431.41px;transform:scaleX(0.823)">34%</div>
<div class="t l" style="left:266.70px;top:449.97px;transform:scaleX(0.9)">Sales -Actual</div>
<div class="t n" style="right:659.90px;top:448.76px;transform:scaleX(0.823)">11,478</div>
<div class="t n" style="right:619.40px;top:448.76px;transform:scaleX(0.823)">11,843</div>
<div class="t n" style="right:579.10px;top:448.76px;transform:scaleX(0.823)">10,713</div>
<div class="t n" style="right:538.70px;top:448.76px;transform:scaleX(0.823)">11,111</div>
<div class="t n" style="right:497.90px;top:448.76px;transform:scaleX(0.823)">11,703</div>
<div class="t n" style="right:457.90px;top:448.76px;transform:scaleX(0.823)">11,680</div>
<div class="t n" style="right:417.40px;top:448.76px;transform:scaleX(0.823)">11,135</div>
<div class="t n" style="right:376.90px;top:448.76px;transform:scaleX(0.823)">11,115</div>
<div class="t n" style="right:336.20px;top:448.76px;transform:scaleX(0.823)">11,657</div>
<div class="t n" style="right:295.70px;top:448.76px;transform:scaleX(0.823)">10,307</div>
<div class="t n" style="right:255.40px;top:448.76px;transform:scaleX(0.823)">10,245</div>
<div class="t n" style="right:215.40px;top:448.76px;transform:scaleX(0.823)">10,687</div>
<div class="t n" style="right:156.50px;top:448.76px;transform:scaleX(0.823)">10,687</div>
<div class="t n" style="right:111.00px;top:448.76px;transform:scaleX(0.823)">133,674</div>
<div class="t l" style="left:266.70px;top:467.32px;transform:scaleX(0.9)">Sales - Budget</div>
<div class="t n" style="right:659.90px;top:466.12px;transform:scaleX(0.823)">11,199</div>
<div class="t n" style="right:619.40px;top:466.12px;transform:scaleX(0.823)">11,066</div>
<div class="t n" style="right:579.10px;top:466.12px;transform:scaleX(0.823)">10,391</div>
<div class="t n" style="right:538.70px;top:466.12px;transform:scaleX(0.823)">11,377</div>
<div class="t n" style="right:497.90px;top:466.12px;transform:scaleX(0.823)">10,797</div>
<div class="t n" style="right:457.90px;top:466.12px;transform:scaleX(0.823)">10,384</div>
<div class="t n" style="right:417.40px;top:466.12px;transform:scaleX(0.823)">10,889</div>
<div class="t n" style="right:376.90px;top:466.12px;transform:scaleX(0.823)">11,125</div>
<div class="t n" style="right:336.20px;top:466.12px;transform:scaleX(0.823)">11,901</div>
<div class="t n" style="right:295.70px;top:466.12px;transform:scaleX(0.823)">11,428</div>
<div class="t n" style="right:255.40px;top:466.12px;transform:scaleX(0.823)">10,042</div>
<div class="t n" style="right:215.40px;top:466.12px;transform:scaleX(0.823)">10,252</div>
<div class="t n" style="right:156.50px;top:466.12px;transform:scaleX(0.823)">10,252</div>
<div class="t n" style="right:111.00px;top:466.12px;transform:scaleX(0.823)">130,851</div>
<div class="t l" style="left:266.70px;top:484.68px;transform:scaleX(0.9)">Sales - Last Year</div>
<div class="t n" style="right:659.90px;top:483.47px;transform:scaleX(0.823)">11,703</div>
<div class="t n" style="right:619.40px;top:483.47px;transform:scaleX(0.823)">11,304</div>
<div class="t n" style="right:579.10px;top:483.47px;transform:scaleX(0.823)">11,427</div>
<div class="t n" style="right:538.70px;top:483.47px;transform:scaleX(0.823)">11,364</div>
<div class="t n" style="right:497.90px;top:483.47px;transform:scaleX(0.823)">10,218</div>
<div class="t n" style="right:457.90px;top:483.47px;transform:scaleX(0.823)">10,587</div>
<div class="t n" style="right:417.40px;top:483.47px;transform:scaleX(0.823)">10,960</div>
<div class="t n" style="right:376.90px;top:483.47px;transform:scaleX(0.823)">10,107</div>
<div class="t n" style="right:336.20px;top:483.47px;transform:scaleX(0.823)">10,636</div>
<div class="t n" style="right:295.70px;top:483.47px;transform:scaleX(0.823)">11,359</div>
<div class="t n" style="right:255.40px;top:483.47px;transform:scaleX(0.823)">11,627</div>
<div class="t n" style="right:215.40px;top:483.47px;transform:scaleX(0.823)">11,609</div>
<div class="t n" style="right:156.50px;top:483.47px;transform:scaleX(0.823)">11,609</div>
<div class="t n" style="right:111.00px;top:483.47px;transform:scaleX(0.823)">132,901</div>
<div class="t l" style="left:266.70px;top:502.03px;transform:scaleX(0.9)">Net Profit - Actual</div>
<div class="t n" style="right:659.90px;top:500.83px;transform:scaleX(0.823)">1,329</div>
<div class="t n" style="right:619.40px;top:500.83px;transform:scaleX(0.823)">1,329</div>
<div class="t n" style="right:579.10px;top:500.83px;transform:scaleX(0.823)">1,496</div>
<div class="t n" style="right:538.70px;top:500.83px;transform:scaleX(0.823)">1,281</div>
<div class="t n" style="right:497.90px;top:500.83px;transform:scaleX(0.823)">1,462</div>
<div class="t n" style="right:457.90px;top:500.83px;transform:scaleX(0.823)">1,235</div>
<div class="t n" style="right:417.40px;top:500.83px;transform:scaleX(0.823)">1,498</div>
<div class="t n" style="right:376.90px;top:500.83px;transform:scaleX(0.823)">1,276</div>
<div class="t n" style="right:336.20px;top:500.83px;transform:scaleX(0.823)">1,490</div>
<div class="t n" style="right:295.70px;top:500.83px;transform:scaleX(0.823)">1,096</div>
<div class="t n" style="right:255.40px;top:500.83px;transform:scaleX(0.823)">1,221</div>
<div class="t n" style="right:215.40px;top:500.83px;transform:scaleX(0.823)">1,439</div>
<div class="t n" style="right:156.50px;top:500.83px;transform:scaleX(0.823)">1,439</div>
<div class="t n" style="right:111.00px;top:500.83px;transform:scaleX(0.823)">16,152</div>
<div class="t l" style="left:266.70px;top:519.39px;transform:scaleX(0.9)">Net Profit - Budget</div>
<div class="t n" style="right:659.90px;top:518.19px;transform:scaleX(0.823)">1,158</div>
<div class="t n" style="right:619.40px;top:518.19px;transform:scaleX(0.823)">938</div>
<div class="t n" style="right:579.10px;top:518.19px;transform:scaleX(0.823)">1,140</div>
<div class="t n" style="right:538.70px;top:518.19px;transform:scaleX(0.823)">1,139</div>
<div class="t n" style="right:497.90px;top:518.19px;transform:scaleX(0.823)">939</div>
<div class="t n" style="right:457.90px;top:518.19px;transform:scaleX(0.823)">961</div>
<div class="t n" style="right:417.40px;top:518.19px;transform:scaleX(0.823)">1,101</div>
<div class="t n" style="right:376.90px;top:518.19px;transform:scaleX(0.823)">968</div>
<div class="t n" style="right:336.20px;top:518.19px;transform:scaleX(0.823)">1,104</div>
<div class="t n" style="right:295.70px;top:518.19px;transform:scaleX(0.823)">970</div>
<div class="t n" style="right:255.40px;top:518.19px;transform:scaleX(0.823)">1,150</div>
<div class="t n" style="right:215.40px;top:518.19px;transform:scaleX(0.823)">1,027</div>
<div class="t n" style="right:156.50px;top:518.19px;transform:scaleX(0.823)">1,027</div>
<div class="t n" style="right:111.00px;top:518.19px;transform:scaleX(0.823)">12,595</div>
<div class="t l" style="left:266.70px;top:536.74px;transform:scaleX(0.9)">Net Profit - Last Year</div>
<div class="t n" style="right:659.90px;top:535.54px;transform:scaleX(0.823)">1,055</div>
<div class="t n" style="right:619.40px;top:535.54px;transform:scaleX(0.823)">936</div>
<div class="t n" style="right:579.10px;top:535.54px;transform:scaleX(0.823)">1,017</div>
<div class="t n" style="right:538.70px;top:535.54px;transform:scaleX(0.823)">959</div>
<div class="t n" style="right:497.90px;top:535.54px;transform:scaleX(0.823)">1,193</div>
<div class="t n" style="right:457.90px;top:535.54px;transform:scaleX(0.823)">979</div>
<div class="t n" style="right:417.40px;top:535.54px;transform:scaleX(0.823)">999</div>
<div class="t n" style="right:376.90px;top:535.54px;transform:scaleX(0.823)">1,180</div>
<div class="t n" style="right:336.20px;top:535.54px;transform:scaleX(0.823)">1,068</div>
<div class="t n" style="right:295.70px;top:535.54px;transform:scaleX(0.823)">1,108</div>
<div class="t n" style="right:255.40px;top:535.54px;transform:scaleX(0.823)">1,008</div>
<div class="t n" style="right:215.40px;top:535.54px;transform:scaleX(0.823)">1,164</div>
<div class="t n" style="right:156.50px;top:535.54px;transform:scaleX(0.823)">1,164</div>
<div class="t n" style="right:111.00px;top:535.54px;transform:scaleX(0.823)">12,666</div>
<div class="t l" style="left:266.70px;top:554.10px;transform:scaleX(0.9)">Net Profit Margin - Actual</div>
<div class="t n" style="right:656.90px;top:552.89px;transform:scaleX(0.823)">11.6%</div>
<div class="t n" style="right:616.40px;top:552.89px;transform:scaleX(0.823)">11.2%</div>
<div class="t n" style="right:576.10px;top:552.89px;transform:scaleX(0.823)">14.0%</div>
<div class="t n" style="right:535.70px;top:552.89px;transform:scaleX(0.823)">11.5%</div>
<div class="t n" style="right:494.90px;top:552.89px;transform:scaleX(0.823)">12.5%</div>
<div class="t n" style="right:454.90px;top:552.89px;transform:scaleX(0.823)">10.6%</div>
<div class="t n" style="right:414.40px;top:552.89px;transform:scaleX(0.823)">13.5%</div>
<div class="t n" style="right:373.90px;top:552.89px;transform:scaleX(0.823)">11.5%</div>
<div class="t n" style="right:333.20px;top:552.89px;transform:scaleX(0.823)">12.8%</div>
<div class="t n" style="right:292.70px;top:552.89px;transform:scaleX(0.823)">10.6%</div>
<div class="t n" style="right:252.40px;top:552.89px;transform:scaleX(0.823)">11.9%</div>
<div class="t n" style="right:212.40px;top:552.89px;transform:scaleX(0.823)">13.5%</div>
<div class="t n" style="right:153.50px;top:552.89px;transform:scaleX(0.823)">13.5%</div>
<div class="t n" style="right:108.00px;top:552.89px;transform:scaleX(0.823)">12.1%</div>
<div class="t l" style="left:266.70px;top:571.45px;transform:scaleX(0.9)">Net Profit Margin - Budget</div>
<div class="t n" style="right:656.90px;top:570.25px;transform:scaleX(0.823)">10.3%</div>
<div class="t n" style="right:616.40px;top:570.25px;transform:scaleX(0.823)">8.5%</div>
<div class="t n" style="right:576.10px;top:570.25px;transform:scaleX(0.823)">11.0%</div>
<div class="t n" style="right:535.70px;top:570.25px;transform:scaleX(0.823)">10.0%</div>
<div class="t n" style="right:494.90px;top:570.25px;transform:scaleX(0.823)">8.7%</div>
<div class="t n" style="right:454.90px;top:570.25px;transform:scaleX(0.823)">9.3%</div>
<div class="t n" style="right:414.40px;top:570.25px;transform:scaleX(0.823)">10.1%</div>
<div class="t n" style="right:373.90px;top:570.25px;transform:scaleX(0.823)">8.7%</div>
<div class="t n" style="right:333.20px;top:570.25px;transform:scaleX(0.823)">9.3%</div>
<div class="t n" style="right:292.70px;top:570.25px;transform:scaleX(0.823)">8.5%</div>
<div class="t n" style="right:252.40px;top:570.25px;transform:scaleX(0.823)">11.5%</div>
<div class="t n" style="right:212.40px;top:570.25px;transform:scaleX(0.823)">10.0%</div>
<div class="t n" style="right:153.50px;top:570.25px;transform:scaleX(0.823)">10.0%</div>
<div class="t n" style="right:108.00px;top:570.25px;transform:scaleX(0.823)">9.6%</div>
<div class="t l" style="left:266.70px;top:588.80px;transform:scaleX(0.9)">Net Profit Margin - Last Year</div>
<div class="t n" style="right:656.90px;top:587.60px;transform:scaleX(0.823)">9.0%</div>
<div class="t n" style="right:616.40px;top:587.60px;transform:scaleX(0.823)">8.3%</div>
<div class="t n" style="right:576.10px;top:587.60px;transform:scaleX(0.823)">8.9%</div>
<div class="t n" style="right:535.70px;top:587.60px;transform:scaleX(0.823)">8.4%</div>
<div class="t n" style="right:494.90px;top:587.60px;transform:scaleX(0.823)">11.7%</div>
<div class="t n" style="right:454.90px;top:587.60px;transform:scaleX(0.823)">9.2%</div>
<div class="t n" style="right:414.40px;top:587.60px;transform:scaleX(0.823)">9.1%</div>
<div class="t n" style="right:373.90px;top:587.60px;transform:scaleX(0.823)">11.7%</div>
<div class="t n" style="right:333.20px;top:587.60px;transform:scaleX(0.823)">10.0%</div>
<div class="t n" style="right:292.70px;top:587.60px;transform:scaleX(0.823)">9.8%</div>
<div class="t n" style="right:252.40px;top:587.60px;transform:scaleX(0.823)">8.7%</div>
<div class="t n" style="right:212.40px;top:587.60px;transform:scaleX(0.823)">10.0%</div>
<div class="t n" style="right:153.50px;top:587.60px;transform:scaleX(0.823)">10.0%</div>
<div class="t n" style="right:108.00px;top:587.60px;transform:scaleX(0.823)">9.5%</div>
<div class="t l" style="left:266.70px;top:606.16px;transform:scaleX(0.9)">Net Return on Investment - Actual</div>
<div class="t n" style="right:659.90px;top:604.96px;transform:scaleX(0.823)">4,565</div>
<div class="t n" style="right:619.40px;top:604.96px;transform:scaleX(0.823)">4,800</div>
<div class="t n" style="right:579.10px;top:604.96px;transform:scaleX(0.823)">5,296</div>
<div class="t n" style="right:538.70px;top:604.96px;transform:scaleX(0.823)">5,352</div>
<div class="t n" style="right:497.90px;top:604.96px;transform:scaleX(0.823)">4,032</div>
<div class="t n" style="right:457.90px;top:604.96px;transform:scaleX(0.823)">5,106</div>
<div class="t n" style="right:417.40px;top:604.96px;transform:scaleX(0.823)">4,552</div>
<div class="t n" style="right:376.90px;top:604.96px;transform:scaleX(0.823)">5,225</div>
<div class="t n" style="right:336.20px;top:604.96px;transform:scaleX(0.823)">4,877</div>
<div class="t n" style="right:295.70px;top:604.96px;transform:scaleX(0.823)">5,095</div>
<div class="t n" style="right:255.40px;top:604.96px;transform:scaleX(0.823)">5,037</div>
<div class="t n" style="right:215.40px;top:604.96px;transform:scaleX(0.823)">4,784</div>
<div class="t n" style="right:156.50px;top:604.96px;transform:scaleX(0.823)">4,784</div>
<div class="t n" style="right:111.00px;top:604.96px;transform:scaleX(0.823)">4,893</div>
<div class="t l" style="left:266.70px;top:623.51px;transform:scaleX(0.9)">Net Return on Investment - Budget</div>
<div class="t n" style="right:659.90px;top:622.31px;transform:scaleX(0.823)">4,180</div>
<div class="t n" style="right:619.40px;top:622.31px;transform:scaleX(0.823)">4,142</div>
<div class="t n" style="right:579.10px;top:622.31px;transform:scaleX(0.823)">4,557</div>
<div class="t n" style="right:538.70px;top:622.31px;transform:scaleX(0.823)">4,933</div>
<div class="t n" style="right:497.90px;top:622.31px;transform:scaleX(0.823)">4,719</div>
<div class="t n" style="right:457.90px;top:622.31px;transform:scaleX(0.823)">4,613</div>
<div class="t n" style="right:417.40px;top:622.31px;transform:scaleX(0.823)">4,453</div>
<div class="t n" style="right:376.90px;top:622.31px;transform:scaleX(0.823)">4,678</div>
<div class="t n" style="right:336.20px;top:622.31px;transform:scaleX(0.823)">4,094</div>
<div class="t n" style="right:295.70px;top:622.31px;transform:scaleX(0.823)">4,544</div>
<div class="t n" style="right:255.40px;top:622.31px;transform:scaleX(0.823)">4,796</div>
<div class="t n" style="right:215.40px;top:622.31px;transform:scaleX(0.823)">4,869</div>
<div class="t n" style="right:156.50px;top:622.31px;transform:scaleX(0.823)">4,869</div>
<div class="t n" style="right:111.00px;top:622.31px;transform:scaleX(0.823)">4,548</div>
<div class="t l" style="left:266.70px;top:640.87px;transform:scaleX(0.9)">Net Return on Investment - Last Year</div>
<div class="t n" style="right:659.90px;top:639.67px;transform:scaleX(0.823)">4,163</div>
<div class="t n" style="right:619.40px;top:639.67px;transform:scaleX(0.823)">4,070</div>
<div class="t n" style="right:579.10px;top:639.67px;transform:scaleX(0.823)">4,360</div>
<div class="t n" style="right:538.70px;top:639.67px;transform:scaleX(0.823)">4,133</div>
<div class="t n" style="right:497.90px;top:639.67px;transform:scaleX(0.823)">4,364</div>
<div class="t n" style="right:457.90px;top:639.67px;transform:scaleX(0.823)">4,998</div>
<div class="t n" style="right:417.40px;top:639.67px;transform:scaleX(0.823)">4,618</div>
<div class="t n" style="right:376.90px;top:639.67px;transform:scaleX(0.823)">4,739</div>
<div class="t n" style="right:336.20px;top:639.67px;transform:scaleX(0.823)">4,854</div>
<div class="t n" style="right:295.70px;top:639.67px;transform:scaleX(0.823)">4,712</div>
<div class="t n" style="right:255.40px;top:639.67px;transform:scaleX(0.823)">4,908</div>
<div class="t n" style="right:215.40px;top:639.67px;transform:scaleX(0.823)">4,645</div>
<div class="t n" style="right:156.50px;top:639.67px;transform:scaleX(0.823)">4,645</div>
<div class="t n" style="right:111.00px;top:639.67px;transform:scaleX(0.823)">4,547</div>
<div class="t l" style="left:266.70px;top:658.23px;transform:scaleX(0.9)">Cost of Investment - Actual</div>
<div class="t n" style="right:659.90px;top:657.02px;transform:scaleX(0.823)">14,376</div>
<div class="t n" style="right:619.40px;top:657.02px;transform:scaleX(0.823)">14,064</div>
<div class="t n" style="right:579.10px;top:657.02px;transform:scaleX(0.823)">13,186</div>
<div class="t n" style="right:538.70px;top:657.02px;transform:scaleX(0.823)">14,963</div>
<div class="t n" style="right:497.90px;top:657.02px;transform:scaleX(0.823)">12,535</div>
<div class="t n" style="right:457.90px;top:657.02px;transform:scaleX(0.823)">12,297</div>
<div class="t n" style="right:417.40px;top:657.02px;transform:scaleX(0.823)">12,682</div>
<div class="t n" style="right:376.90px;top:657.02px;transform:scaleX(0.823)">14,812</div>
<div class="t n" style="right:336.20px;top:657.02px;transform:scaleX(0.823)">13,160</div>
<div class="t n" style="right:295.70px;top:657.02px;transform:scaleX(0.823)">13,872</div>
<div class="t n" style="right:255.40px;top:657.02px;transform:scaleX(0.823)">13,616</div>
<div class="t n" style="right:215.40px;top:657.02px;transform:scaleX(0.823)">12,809</div>
<div class="t n" style="right:156.50px;top:657.02px;transform:scaleX(0.823)">12,809</div>
<div class="t n" style="right:111.00px;top:657.02px;transform:scaleX(0.823)">13,531</div>
<div class="t l" style="left:266.70px;top:675.58px;transform:scaleX(0.9)">Cost of Investment - Budget</div>
<div class="t n" style="right:659.90px;top:674.38px;transform:scaleX(0.823)">11,749</div>
<div class="t n" style="right:619.40px;top:674.38px;transform:scaleX(0.823)">13,112</div>
<div class="t n" style="right:579.10px;top:674.38px;transform:scaleX(0.823)">12,367</div>
<div class="t n" style="right:538.70px;top:674.38px;transform:scaleX(0.823)">12,524</div>
<div class="t n" style="right:497.90px;top:674.38px;transform:scaleX(0.823)">11,230</div>
<div class="t n" style="right:457.90px;top:674.38px;transform:scaleX(0.823)">12,187</div>
<div class="t n" style="right:417.40px;top:674.38px;transform:scaleX(0.823)">12,335</div>
<div class="t n" style="right:376.90px;top:674.38px;transform:scaleX(0.823)">12,868</div>
<div class="t n" style="right:336.20px;top:674.38px;transform:scaleX(0.823)">11,009</div>
<div class="t n" style="right:295.70px;top:674.38px;transform:scaleX(0.823)">12,490</div>
<div class="t n" style="right:255.40px;top:674.38px;transform:scaleX(0.823)">12,034</div>
<div class="t n" style="right:215.40px;top:674.38px;transform:scaleX(0.823)">12,653</div>
<div class="t n" style="right:156.50px;top:674.38px;transform:scaleX(0.823)">12,653</div>
<div class="t n" style="right:111.00px;top:674.38px;transform:scaleX(0.823)">12,213</div>
<div class="t l" style="left:266.70px;top:692.94px;transform:scaleX(0.9)">Cost of Investment - Last Year</div>
<div class="t n" style="right:659.90px;top:691.74px;transform:scaleX(0.823)">12,586</div>
<div class="t n" style="right:619.40px;top:691.74px;transform:scaleX(0.823)">12,237</div>
<div class="t n" style="right:579.10px;top:691.74px;transform:scaleX(0.823)">13,672</div>
<div class="t n" style="right:538.70px;top:691.74px;transform:scaleX(0.823)">13,768</div>
<div class="t n" style="right:497.90px;top:691.74px;transform:scaleX(0.823)">11,330</div>
<div class="t n" style="right:457.90px;top:691.74px;transform:scaleX(0.823)">11,967</div>
<div class="t n" style="right:417.40px;top:691.74px;transform:scaleX(0.823)">12,949</div>
<div class="t n" style="right:376.90px;top:691.74px;transform:scaleX(0.823)">11,483</div>
<div class="t n" style="right:336.20px;top:691.74px;transform:scaleX(0.823)">12,592</div>
<div class="t n" style="right:295.70px;top:691.74px;transform:scaleX(0.823)">12,805</div>
<div class="t n" style="right:255.40px;top:691.74px;transform:scaleX(0.823)">12,633</div>
<div class="t n" style="right:215.40px;top:691.74px;transform:scaleX(0.823)">11,279</div>
<div class="t n" style="right:156.50px;top:691.74px;transform:scaleX(0.823)">11,279</div>
<div class="t n" style="right:111.00px;top:691.74px;transform:scaleX(0.823)">12,442</div>
<div class="t l" style="left:266.70px;top:710.29px;transform:scaleX(0.9)">Return on Investment - Acutal</div>
<div class="t n" style="right:656.90px;top:709.09px;transform:scaleX(0.823)">32%</div>
<div class="t n" style="right:616.40px;top:709.09px;transform:scaleX(0.823)">34%</div>
<div class="t n" style="right:576.10px;top:709.09px;transform:scaleX(0.823)">40%</div>
<div class="t n" style="right:535.70px;top:709.09px;transform:scaleX(0.823)">36%</div>
<div class="t n" style="right:494.90px;top:709.09px;transform:scaleX(0.823)">32%</div>
<div class="t n" style="right:454.90px;top:709.09px;transform:scaleX(0.823)">42%</div>
<div class="t n" style="right:414.40px;top:709.09px;transform:scaleX(0.823)">36%</div>
<div class="t n" style="right:373.90px;top:709.09px;transform:scaleX(0.823)">35%</div>
<div class="t n" style="right:333.20px;top:709.09px;transform:scaleX(0.823)">37%</div>
<div class="t n" style="right:292.70px;top:709.09px;transform:scaleX(0.823)">37%</div>
<div class="t n" style="right:252.40px;top:709.09px;transform:scaleX(0.823)">37%</div>
<div class="t n" style="right:212.40px;top:709.09px;transform:scaleX(0.823)">37%</div>
<div class="t n" style="right:153.50px;top:709.09px;transform:scaleX(0.823)">37%</div>
<div class="t n" style="right:108.00px;top:709.09px;transform:scaleX(0.823)">36%</div>
<div class="t l" style="left:266.70px;top:727.65px;transform:scaleX(0.9)">Return on Investment - Budget</div>
<div class="t n" style="right:656.90px;top:726.45px;transform:scaleX(0.823)">36%</div>
<div class="t n" style="right:616.40px;top:726.45px;transform:scaleX(0.823)">32%</div>
<div class="t n" style="right:576.10px;top:726.45px;transform:scaleX(0.823)">37%</div>
<div class="t n" style="right:535.70px;top:726.45px;transform:scaleX(0.823)">39%</div>
<div class="t n" style="right:494.90px;top:726.45px;transform:scaleX(0.823)">42%</div>
<div class="t n" style="right:454.90px;top:726.45px;transform:scaleX(0.823)">38%</div>
<div class="t n" style="right:414.40px;top:726.45px;transform:scaleX(0.823)">36%</div>
<div class="t n" style="right:373.90px;top:726.45px;transform:scaleX(0.823)">36%</div>
<div class="t n" style="right:333.20px;top:726.45px;transform:scaleX(0.823)">37%</div>
<div class="t n" style="right:292.70px;top:726.45px;transform:scaleX(0.823)">36%</div>
<div class="t n" style="right:252.40px;top:726.45px;transform:scaleX(0.823)">40%</div>
<div class="t n" style="right:212.40px;top:726.45px;transform:scaleX(0.823)">38%</div>
<div class="t n" style="right:153.50px;top:726.45px;transform:scaleX(0.823)">38%</div>
<div class="t n" style="right:108.00px;top:726.45px;transform:scaleX(0.823)">37%</div>
<div class="t l" style="left:266.70px;top:745.00px;transform:scaleX(0.9)">Return on Investment - Last Year</div>
<div class="t n" style="right:656.90px;top:743.80px;transform:scaleX(0.823)">33%</div>
<div class="t n" style="right:616.40px;top:743.80px;transform:scaleX(0.823)">33%</div>
<div class="t n" style="right:576.10px;top:743.80px;transform:scaleX(0.823)">32%</div>
<div class="t n" style="right:535.70px;top:743.80px;transform:scaleX(0.823)">30%</div>
<div class="t n" style="right:494.90px;top:743.80px;transform:scaleX(0.823)">39%</div>
<div class="t n" style="right:454.90px;top:743.80px;transform:scaleX(0.823)">42%</div>
<div class="t n" style="right:414.40px;top:743.80px;transform:scaleX(0.823)">36%</div>
<div class="t n" style="right:373.90px;top:743.80px;transform:scaleX(0.823)">41%</div>
<div class="t n" style="right:333.20px;top:743.80px;transform:scaleX(0.823)">39%</div>
<div class="t n" style="right:292.70px;top:743.80px;transform:scaleX(0.823)">37%</div>
<div class="t n" style="right:252.40px;top:743.80px;transform:scaleX(0.823)">39%</div>
<div class="t n" style="right:212.40px;top:743.80px;transform:scaleX(0.823)">41%</div>
<div class="t n" style="right:153.50px;top:743.80px;transform:scaleX(0.823)">41%</div>
<div class="t n" style="right:108.00px;top:743.80px;transform:scaleX(0.823)">37%</div>
<div style="left:1036px;top:624px;width:1px;height:6px;background:#3a3020"></div>
<div style="left:1035px;top:624px;width:1px;height:6px;background:rgba(58,48,32,0.3)"></div>
<div style="left:1037px;top:624px;width:1px;height:6px;background:rgba(58,48,32,0.5)"></div></div></body></html>
